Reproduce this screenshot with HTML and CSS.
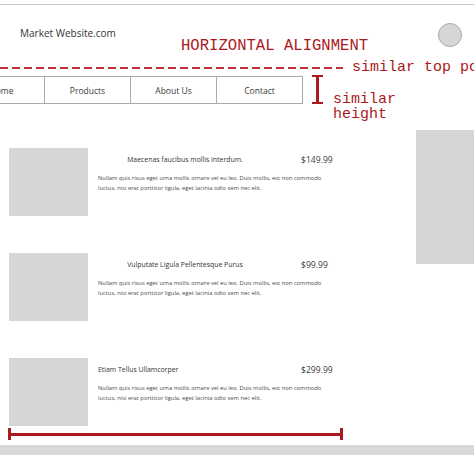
FILE: index.html
```html
<!DOCTYPE html>
<html lang="en">
<head>
<meta charset="utf-8">
<title>Market Website.com</title>
<link rel="stylesheet" href="styles.css">
</head>
<body>
<div class="page">
  <header class="masthead">
    <div class="brand">Market Website.com</div>
    <div class="avatar"></div>
  </header>

  <nav class="menu">
    <a class="menu-item">Home</a>
    <a class="menu-item">Products</a>
    <a class="menu-item">About Us</a>
    <a class="menu-item">Contact</a>
  </nav>

  <div class="content">
    <section class="products">
      <article class="product">
        <div class="thumb"></div>
        <div class="info">
          <div class="head">
            <h2 class="title">Maecenas faucibus mollis interdum.</h2>
            <span class="price">$149.99</span>
          </div>
          <p class="desc">Nullam quis risus eget urna mollis ornare vel eu leo. Duis mollis, est non commodo luctus, nisi erat porttitor ligula, eget lacinia odio sem nec elit.</p>
        </div>
      </article>
      <article class="product">
        <div class="thumb"></div>
        <div class="info">
          <div class="head">
            <h2 class="title">Vulputate Ligula Pellentesque Purus</h2>
            <span class="price">$99.99</span>
          </div>
          <p class="desc">Nullam quis risus eget urna mollis ornare vel eu leo. Duis mollis, est non commodo luctus, nisi erat porttitor ligula, eget lacinia odio sem nec elit.</p>
        </div>
      </article>
      <article class="product">
        <div class="thumb"></div>
        <div class="info">
          <div class="head">
            <h2 class="title title-left">Etiam Tellus Ullamcorper</h2>
            <span class="price">$299.99</span>
          </div>
          <p class="desc">Nullam quis risus eget urna mollis ornare vel eu leo. Duis mollis, est non commodo luctus, nisi erat porttitor ligula, eget lacinia odio sem nec elit.</p>
        </div>
      </article>
    </section>
    <aside class="sidebar"></aside>
  </div>

  <footer class="footer"></footer>

  <!-- red markup laid over the wireframe -->
  <div class="note note-heading">HORIZONTAL ALIGNMENT</div>
  <div class="guide-dashed"></div>
  <div class="note note-top">similar top position</div>
  <div class="bracket-v"></div>
  <div class="note note-height">similar<br>height</div>
  <div class="bracket-h"></div>
</div>
</body>
</html>
```

FILE: styles.css
```css
html, body {
  margin: 0;
  padding: 0;
  background: #ffffff;
}

body {
  width: 474px;
  height: 474px;
  overflow: hidden;
  font-family: "Open Sans", "Liberation Sans", sans-serif;
  color: #3a3a3a;
}

.page {
  position: relative;
  padding-top: 4px;
  height: 470px;
}

/* header */
.masthead {
  display: flex;
  justify-content: space-between;
  align-items: flex-start;
  box-sizing: border-box;
  height: 72px;
  border-top: 1px solid #c6c6c6;
  padding: 21px 12px 0 20px;
}

.brand {
  font-size: 10px;
  line-height: 14px;
  color: #333333;
}

.avatar {
  width: 22px;
  height: 22px;
  margin-top: -3px;
  border-radius: 50%;
  background: #d6d6d6;
  border: 1px solid #a9a9a9;
}

/* navigation */
.menu {
  display: flex;
  margin-left: -42px;
  height: 28px;
}

.menu-item {
  box-sizing: border-box;
  width: 87px;
  height: 28px;
  margin-right: -1px;
  border: 1px solid #ababab;
  display: flex;
  align-items: center;
  justify-content: center;
  font-size: 8.5px;
  color: #3a3a3a;
}

/* product list + sidebar */
.content {
  display: flex;
  align-items: flex-start;
}

.products {
  padding-top: 44px;
  width: 350px;
}

.product {
  display: flex;
  margin-bottom: 37px;
}

.product:last-child {
  margin-bottom: 19px;
}

.thumb {
  flex: none;
  width: 79px;
  height: 68px;
  margin-left: 9px;
  background: #d6d6d6;
}

.info {
  margin-left: 10px;
  width: 240px;
}

.head {
  display: grid;
  grid-template-columns: 174px 1fr;
  margin-top: 6px;
  height: 12px;
  align-items: center;
}

.title {
  margin: 0;
  font-size: 6.9px;
  font-weight: normal;
  line-height: 12px;
  text-align: center;
  color: #333333;
  white-space: nowrap;
}

.title-left {
  text-align: left;
}

.price {
  padding-left: 29px;
  font-size: 8.6px;
  line-height: 12px;
  color: #3a3a3a;
}

.desc {
  margin: 7px 0 0;
  font-size: 5.8px;
  line-height: 10px;
  color: #4a4a4a;
  width: 234px;
}

.sidebar {
  margin-left: auto;
  margin-top: 26px;
  width: 58px;
  height: 134px;
  background: #d6d6d6;
}

.footer {
  height: 10px;
  background: #d9d9d9;
}

/* red annotations */
.note {
  position: absolute;
  font-family: "Liberation Mono", "DejaVu Sans Mono", monospace;
  font-size: 15px;
  line-height: 15px;
  color: #ac1820;
  white-space: nowrap;
}

.note-heading {
  left: 181px;
  top: 39px;
  font-size: 15.6px;
}

.note-top {
  left: 352px;
  top: 60px;
}

.note-height {
  left: 333px;
  top: 92px;
  line-height: 15px;
}

.guide-dashed {
  position: absolute;
  left: 0;
  top: 67px;
  width: 343px;
  height: 2px;
  background: repeating-linear-gradient(to right, #c0303a 0 8px, transparent 8px 12px);
}

.bracket-v {
  position: absolute;
  left: 312px;
  top: 75px;
  width: 11px;
  height: 29px;
  box-sizing: border-box;
  border-top: 2px solid #ac1820;
  border-bottom: 2px solid #ac1820;
  background: linear-gradient(to right, transparent 4px, #ac1820 4px 7px, transparent 7px);
}

.bracket-h {
  position: absolute;
  left: 8px;
  top: 428px;
  width: 335px;
  height: 12px;
  box-sizing: border-box;
  border-left: 3px solid #ac1820;
  border-right: 3px solid #ac1820;
  background: linear-gradient(to bottom, transparent 5px, #ac1820 5px 8px, transparent 8px);
}
```
